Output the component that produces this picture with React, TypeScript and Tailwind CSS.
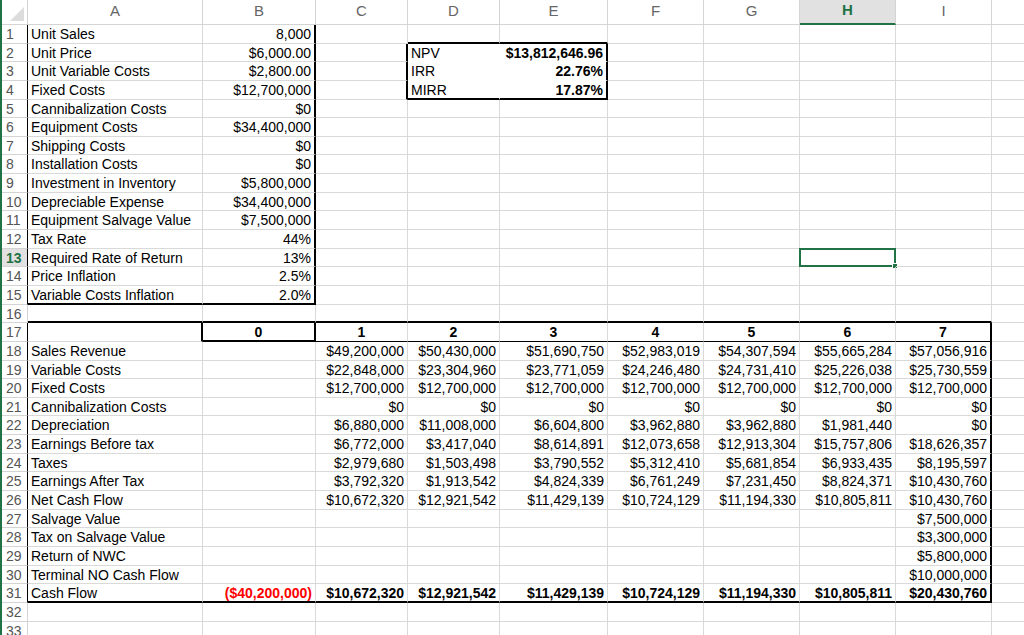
import React from "react";

const W = [28, 175, 113, 92, 92, 108, 96, 96, 96, 96, 40];
const cols = ["", "A", "B", "C", "D", "E", "F", "G", "H", "I", ""];

type C = { t: string; a?: "l" | "r" | "c"; b?: boolean; red?: boolean };
const data: Record<number, Record<number, C>> = {};
const set = (r: number, c: number, v: C) => {
  (data[r] ||= {})[c] = v;
};
const top: [string, string][] = [
  ["Unit Sales", "8,000"],
  ["Unit Price", "$6,000.00"],
  ["Unit Variable Costs", "$2,800.00"],
  ["Fixed Costs", "$12,700,000"],
  ["Cannibalization Costs", "$0"],
  ["Equipment Costs", "$34,400,000"],
  ["Shipping Costs", "$0"],
  ["Installation Costs", "$0"],
  ["Investment in Inventory", "$5,800,000"],
  ["Depreciable Expense", "$34,400,000"],
  ["Equipment Salvage Value", "$7,500,000"],
  ["Tax Rate", "44%"],
  ["Required Rate of Return", "13%"],
  ["Price Inflation", "2.5%"],
  ["Variable Costs Inflation", "2.0%"],
];
top.forEach(([a, b], i) => {
  set(i + 1, 1, { t: a });
  set(i + 1, 2, { t: b, a: "r" });
});
set(2, 4, { t: "NPV" });
set(3, 4, { t: "IRR" });
set(4, 4, { t: "MIRR" });
set(2, 5, { t: "$13,812,646.96", a: "r", b: true });
set(3, 5, { t: "22.76%", a: "r", b: true });
set(4, 5, { t: "17.87%", a: "r", b: true });
set(17, 2, { t: "0", a: "c", b: true });
for (let i = 1; i <= 7; i++) set(17, i + 2, { t: String(i), a: "c", b: true });
const rows: [string, string[]][] = [
  ["Sales Revenue", ["$49,200,000", "$50,430,000", "$51,690,750", "$52,983,019", "$54,307,594", "$55,665,284", "$57,056,916"]],
  ["Variable Costs", ["$22,848,000", "$23,304,960", "$23,771,059", "$24,246,480", "$24,731,410", "$25,226,038", "$25,730,559"]],
  ["Fixed Costs", Array(7).fill("$12,700,000")],
  ["Cannibalization Costs", Array(7).fill("$0")],
  ["Depreciation", ["$6,880,000", "$11,008,000", "$6,604,800", "$3,962,880", "$3,962,880", "$1,981,440", "$0"]],
  ["Earnings Before tax", ["$6,772,000", "$3,417,040", "$8,614,891", "$12,073,658", "$12,913,304", "$15,757,806", "$18,626,357"]],
  ["Taxes", ["$2,979,680", "$1,503,498", "$3,790,552", "$5,312,410", "$5,681,854", "$6,933,435", "$8,195,597"]],
  ["Earnings After Tax", ["$3,792,320", "$1,913,542", "$4,824,339", "$6,761,249", "$7,231,450", "$8,824,371", "$10,430,760"]],
  ["Net Cash Flow", ["$10,672,320", "$12,921,542", "$11,429,139", "$10,724,129", "$11,194,330", "$10,805,811", "$10,430,760"]],
  ["Salvage Value", ["", "", "", "", "", "", "$7,500,000"]],
  ["Tax on Salvage Value", ["", "", "", "", "", "", "$3,300,000"]],
  ["Return of NWC", ["", "", "", "", "", "", "$5,800,000"]],
  ["Terminal NO Cash Flow", ["", "", "", "", "", "", "$10,000,000"]],
];
rows.forEach(([l, v], i) => {
  set(18 + i, 1, { t: l });
  v.forEach((x, j) => x && set(18 + i, j + 3, { t: x, a: "r" }));
});
set(31, 1, { t: "Cash Flow" });
set(31, 2, { t: "($40,200,000)", a: "r", b: true, red: true });
["$10,672,320", "$12,921,542", "$11,429,139", "$10,724,129", "$11,194,330", "$10,805,811", "$20,430,760"].forEach((x, j) =>
  set(31, j + 3, { t: x, a: "r", b: true })
);

const inTop = (r: number) => r >= 1 && r <= 15;
const inBot = (r: number) => r >= 17 && r <= 31;

function borders(r: number, c: number): string {
  let right = "border-r";
  let rightC = "";
  let bottom = "border-b";
  let bottomC = "";
  // left thin black lines of the two tables (right edge of row header)
  if (c === 0 && (inTop(r) || inBot(r))) rightC = "border-r-black";
  // top table
  if (c === 2 && inTop(r)) { right = "border-r-2"; rightC = "border-r-black"; }
  if (r === 15 && (c === 1 || c === 2)) { bottom = "border-b-2"; bottomC = "border-b-black"; }
  // NPV box
  if ((c === 3 || c === 5) && r >= 2 && r <= 4) { right = "border-r-2"; rightC = "border-r-black"; }
  if (c === 4 && r >= 2 && r <= 4) rightC = "border-r-white";
  if ((c === 4 || c === 5) && (r === 1 || r === 4)) { bottom = "border-b-2"; bottomC = "border-b-black"; }
  if ((c === 4 || c === 5) && (r === 2 || r === 3)) bottomC = "border-b-white";
  // bottom table
  if (r === 16 && c >= 1 && c <= 9) { bottom = "border-b-2"; bottomC = "border-b-black"; }
  if (r === 17 && (c === 1 || c === 2)) { right = "border-r-2"; rightC = "border-r-black"; }
  if (r === 17 && c === 2) { bottom = "border-b-2"; bottomC = "border-b-black"; }
  if (r === 17 && c >= 3 && c <= 9) bottomC = "border-b-black";
  if (c === 9 && inBot(r)) { right = "border-r-2"; rightC = "border-r-black"; }
  if (r === 31 && c >= 1 && c <= 9) { bottom = "border-b-2"; bottomC = "border-b-black"; }
  return `${right} ${bottom} ${rightC} ${bottomC}`;
}

export default function App() {
  return (
    <div
      className="relative flex flex-col w-[1024px] h-[635px] overflow-hidden bg-white text-[14px] text-black"
      style={{ fontFamily: '"Liberation Sans", Arial, sans-serif' }}
    >
      <div className="flex h-[25px] shrink-0">
        {cols.map((c, i) => (
          <div
            key={i}
            style={{ width: W[i] }}
            className={`relative shrink-0 flex items-end justify-center pb-[2px] text-[15px] border-r border-[#d4d4d4] ${
              c === "H" ? "bg-[#e1e1e1] text-[#217346] font-bold border-b-2 border-b-[#217346]" : "text-[#666] border-b"
            }`}
          >
            {i === 0 ? (
              <div className="absolute right-[3px] bottom-[3px] w-0 h-0 border-l-[14px] border-l-transparent border-b-[14px] border-b-[#dcdcdc]" />
            ) : (
              c
            )}
          </div>
        ))}
      </div>
      {Array.from({ length: 33 }, (_, ri) => {
        const r = ri + 1;
        return (
          <div key={r} className="flex h-[18.65px] shrink-0">
            {W.map((w, ci) => {
              if (ci === 0)
                return (
                  <div
                    key={ci}
                    style={{ width: w }}
                    className={`shrink-0 pl-[6px] leading-[18px] text-[14px] border-[#d4d4d4] ${borders(r, ci)} ${
                      r === 13 ? "bg-[#e1e1e1] text-[#217346] font-bold" : "text-[#555]"
                    }`}
                  >
                    {r}
                  </div>
                );
              const d = data[r]?.[ci];
              const sel = r === 13 && ci === 8;
              return (
                <div
                  key={ci}
                  style={{ width: w }}
                  className={`relative shrink-0 px-[3px] leading-[18px] whitespace-nowrap border-[#d9d9d9] ${borders(r, ci)} ${
                    d?.a === "r" ? "text-right" : d?.a === "c" ? "text-center" : "text-left"
                  } ${d?.b ? "font-bold" : ""} ${d?.red ? "text-[#ff0000]" : ""}`}
                >
                  {d?.t}
                  {sel && (
                    <div className="absolute -left-[1px] -top-[1px] -right-[1px] -bottom-[1px] border-2 border-[#217346]">
                      <div className="absolute -right-[4px] -bottom-[4px] w-[6px] h-[6px] bg-[#217346] border border-white" />
                    </div>
                  )}
                </div>
              );
            })}
          </div>
        );
      })}
      <div className="absolute left-0 top-0 w-[2px] h-full bg-[#217346]" />
    </div>
  );
}
